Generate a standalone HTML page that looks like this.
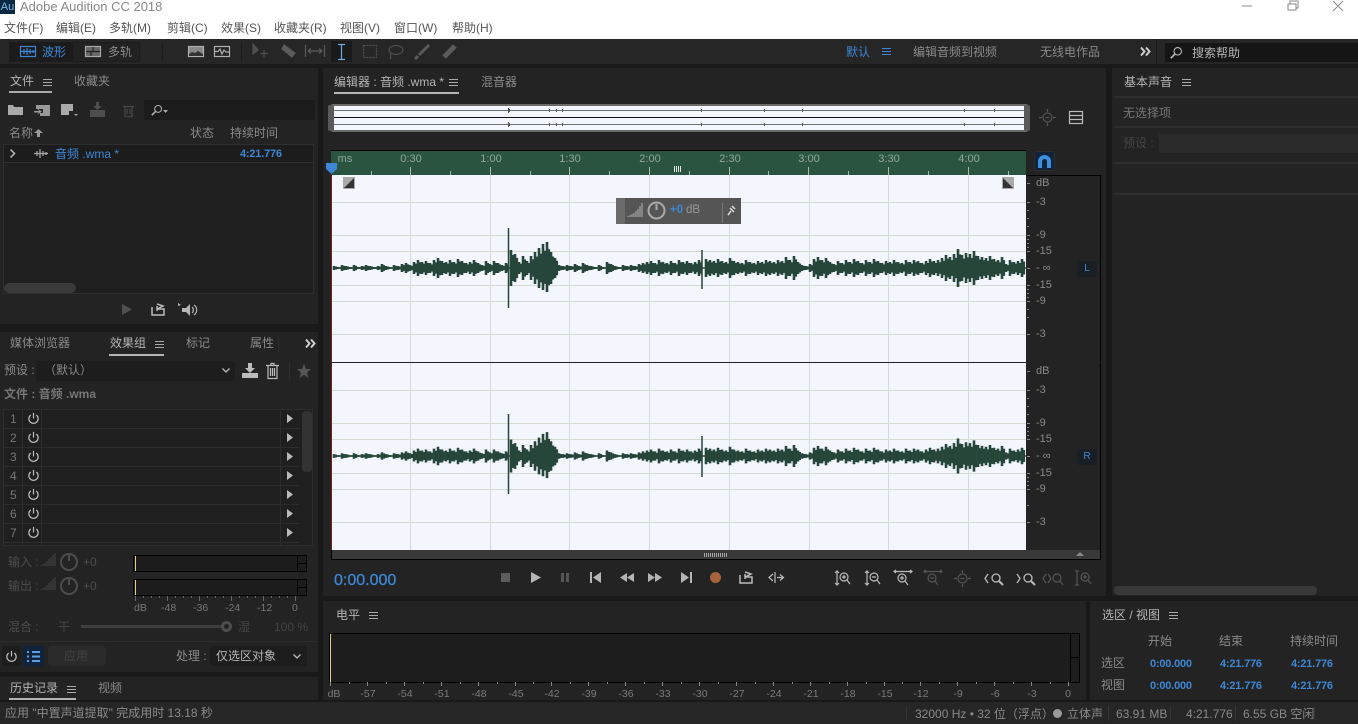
<!DOCTYPE html>
<html><head><meta charset="utf-8"><title>Adobe Audition CC 2018</title>
<style>
html,body{margin:0;padding:0;width:1358px;height:724px;overflow:hidden;background:#191919}
body{position:relative;font-family:"Liberation Sans","Noto Sans CJK SC",sans-serif;font-size:12px;color:#999}
.t{position:absolute;white-space:nowrap;line-height:14px}
.b{position:absolute;box-sizing:border-box}
svg.i{position:absolute;overflow:visible;fill:none;stroke:#b0b0b0;stroke-width:1.2}
.blue{color:#3d87d6}.dim{color:#4d4d4d}.mid{color:#8a8a8a}.lt{color:#b5b5b5}
.menu{color:#555;top:21px}
.db{color:#8a8a8a;font-size:11px;left:1036px}
.tick{color:#7b7b7b;font-size:10.5px;top:687px;transform:translateX(-50%)}
.rt{color:#8fa79b;font-size:11px;top:152px;transform:translateX(-50%)}
.num{color:#777;font-size:12px;left:10px}
.val{font-size:11px;font-weight:bold;letter-spacing:-.2px}
</style></head><body>
<svg width="0" height="0" style="position:absolute"><defs>
<symbol id="pw" viewBox="0 0 14 14" overflow="visible"><path d="M4 3.2A5 5 0 1 0 10 3.2M7 1V7" fill="none" stroke="#bdbdbd" stroke-width="1.3"/></symbol>
<symbol id="ham" viewBox="0 0 9 9"><path d="M0 1.5H9M0 4.5H9M0 7.5H9" stroke="#aaa" stroke-width="1"/></symbol>
<symbol id="mag" viewBox="0 0 16 16" overflow="visible"><circle cx="6.5" cy="6.5" r="4.6" fill="none" stroke="currentColor" stroke-width="1.3"/><path d="M10 10L15 15" stroke="currentColor" stroke-width="2"/></symbol>
<path id="wave" fill="none" d="M334-2v4M338-1v2M342-3v6M346-2v4M350-1v2M354-3v6M358-1v2M362-2v4M366-3v6M370-2v4M374-1v2M378-2v4M382-4v8M386-2v4M390-1v2M394-3v6M398-2v4M402-4v8M406-5v10M410-3v6M414-6v12M418-8v16M422-6v12M426-7v14M430-5v10M434-8v16M438-10v20M442-7v14M446-6v12M450-8v16M454-6v12M458-9v18M462-7v14M466-5v10M470-6v12M474-8v16M478-5v10M482-3v6M486-7v14M490-4v8M494-7v14M498-5v10M502-3v6M506-5v10M511-18v36M515-14v28M519-6v12M523-12v24M527-7v14M531-12v24M535-16v32M539-20v40M543-24v46M547-26v50M551-16v32M555-10v20M559-3v6M563-2v4M567-3v6M571-2v4M575-4v8M579-2v4M583-5v10M587-3v6M591-2v4M595-1v2M599-3v6M603-1v2M607-6v12M611-4v8M615-2v4M619-1v2M623-3v6M627-2v4M631-3v6M635-2v4M639-4v8M643-5v10M647-6v12M651-7v14M655-5v10M659-8v16M663-6v12M667-5v10M671-7v14M675-5v10M679-8v16M683-6v12M687-7v14M691-5v10M695-6v12M699-8v16M706-9v18M710-8v16M714-7v14M718-9v18M722-7v14M726-6v12M730-10v20M734-7v14M738-6v12M742-5v10M746-8v16M750-6v12M754-5v10M758-7v14M762-6v12M766-8v16M770-7v14M774-6v12M778-8v16M782-7v14M786-11v22M790-8v16M794-12v24M798-6v12M802-3v6M806-2v4M810-4v8M814-9v18M818-11v22M822-8v16M826-10v20M830-6v12M834-4v8M838-7v14M842-5v10M846-8v16M850-6v12M854-9v18M858-7v14M862-5v10M866-8v16M870-6v12M874-9v18M878-7v14M882-5v10M886-7v14M890-6v12M894-8v16M898-6v12M902-5v10M906-8v16M910-6v12M914-8v16M918-7v14M922-5v10M926-7v14M930-9v18M934-7v14M938-8v16M942-10v20M946-13v26M950-11v22M954-14v28M958-19v38M962-13v26M966-15v30M970-14v28M974-17v34M978-12v24M982-11v22M986-10v20M990-12v24M994-9v18M998-8v16M1002-11v22M1006-4v8M1010-8v16M1014-6v12M1018-7v14M1022-9v18"/>
<symbol id="chev" viewBox="0 0 11 9" overflow="visible"><path d="M1 .5L4.500 4.500L1 8.500M6 .5L9.500 4.500L6 8.500" fill="none" stroke="#d0d0d0" stroke-width="2"/></symbol>
</defs></svg>

<!-- title + menu -->
<div class="b" style="left:0;top:0;width:1358px;height:39px;background:#fff"></div>
<div class="b" style="left:0;top:0;width:15px;height:14px;background:#0a2a44;color:#7fb4e6;font-size:11px;line-height:14px;text-align:center">Au</div>
<div class="t" style="left:20px;top:0;color:#888;font-size:13px">Adobe Audition CC 2018</div>
<div class="t menu" style="left:4px">文件(F)</div><div class="t menu" style="left:56px">编辑(E)</div><div class="t menu" style="left:109px">多轨(M)</div><div class="t menu" style="left:167px">剪辑(C)</div><div class="t menu" style="left:221px">效果(S)</div><div class="t menu" style="left:274px">收藏夹(R)</div><div class="t menu" style="left:340px">视图(V)</div><div class="t menu" style="left:394px">窗口(W)</div><div class="t menu" style="left:452px">帮助(H)</div>
<svg class="i" style="left:1242px;top:0;stroke:#888;stroke-width:1" width="110" height="14"><path d="M0 6H10M46 4H54V10H46ZM48 4V1H56V8H54M91 1L101 11M101 1L91 11"/></svg>

<!-- toolbar -->
<div class="b" style="left:0;top:39px;width:1358px;height:25px;background:#262626"></div>
<div class="b" style="left:9px;top:42px;width:131px;height:20px;background:#222;border:1px solid #1c1c1c"></div>
<div class="b" style="left:10px;top:43px;width:63px;height:18px;background:#1b1b1b"></div>
<svg class="i" style="left:20px;top:46px;stroke:#3d87d6" width="16" height="11"><rect x=".5" y=".5" width="15" height="10"/><path d="M1 5.5H15M4 3V8M7 2V9M10 3V8M13 4V7"/></svg>
<div class="t blue" style="left:42px;top:45px">波形</div>
<svg class="i" style="left:85px;top:46px;stroke:#aaa" width="16" height="11"><rect x=".5" y=".5" width="15" height="10" fill="#666"/><path d="M1 5.5H15M8 1V5M6 6V10" stroke="#222"/></svg>
<div class="t mid" style="left:108px;top:45px">多轨</div>
<div class="b" style="left:162px;top:42px;width:1px;height:20px;background:#1c1c1c"></div>
<svg class="i" style="left:188px;top:46px" width="16" height="11"><rect x=".5" y=".5" width="15" height="10" fill="#888"/><path d="M1 8L4 6L7 7L10 5L15 8V10H1Z" fill="#333" stroke="none"/></svg>
<svg class="i" style="left:214px;top:46px" width="16" height="11"><rect x=".5" y=".5" width="15" height="10"/><path d="M1 5.5H4L6 3L8 8L10 4L12 6H15"/></svg>
<div class="b" style="left:241px;top:42px;width:1px;height:20px;background:#1c1c1c"></div>
<svg class="i" style="left:252px;top:44px;stroke:#4f4f4f" width="18" height="14"><path d="M1 0V10L6 6Z" fill="#4f4f4f"/><path d="M12 6V13M8.500 9.500H16"/></svg>
<svg class="i" style="left:281px;top:44px;stroke:#5b5b5b" width="16" height="15"><path d="M3 1L14 9L11 13L1 5Z" fill="#5b5b5b"/></svg>
<svg class="i" style="left:305px;top:45px;stroke:#5b5b5b" width="20" height="13"><path d="M.5 0V12M19.500 0V12M3 6H17M3 6L6 3.500M3 6L6 8.500M17 6L14 3.500M17 6L14 8.500"/></svg>
<div class="b" style="left:331px;top:41px;width:21px;height:21px;background:#1a1a1a"></div>
<svg class="i" style="left:337px;top:44px;stroke:#6fa9e0" width="9" height="16"><path d="M1 .5H8M1 15.500H8M4.500 .5V15.500"/></svg>
<svg class="i" style="left:363px;top:45px;stroke:#4f4f4f;stroke-dasharray:2 1" width="14" height="13"><rect x=".5" y=".5" width="13" height="12"/></svg>
<svg class="i" style="left:388px;top:45px;stroke:#4f4f4f" width="16" height="14"><ellipse cx="8" cy="5" rx="7" ry="4.500"/><path d="M3 8C2 10 4 12 2 14"/></svg>
<svg class="i" style="left:414px;top:45px;stroke:#5b5b5b;stroke-width:3" width="16" height="14"><path d="M15 0L5 10M4 11L1 14"/></svg>
<svg class="i" style="left:441px;top:44px;stroke:#5b5b5b;stroke-width:5" width="16" height="15"><path d="M14 2L3 13"/></svg>

<div class="t blue" style="left:846px;top:45px">默认</div>
<svg style="position:absolute;left:882px;top:47px" width="9" height="9"><path d="M0 1.500H9M0 4.500H9M0 7.500H9" stroke="#3d87d6"/></svg>
<div class="t mid" style="left:913px;top:45px">编辑音频到视频</div>
<div class="t mid" style="left:1040px;top:45px">无线电作品</div>
<svg style="position:absolute;left:1140px;top:47px;overflow:visible" width="11" height="9"><use href="#chev" width="11" height="9"/></svg>
<div class="b" style="left:1156px;top:39px;width:1px;height:25px;background:#1c1c1c"></div>
<div class="b" style="left:1165px;top:43px;width:193px;height:19px;background:#151515"></div>
<svg class="i" style="left:1170px;top:46px;color:#bbb;transform:scaleX(-1)" width="13" height="13"><use href="#mag" width="13" height="13"/></svg>
<div class="t lt" style="left:1192px;top:46px">搜索帮助</div>

<!-- panels -->
<div class="b" style="left:0;top:68px;width:318px;height:256px;background:#232323"></div>
<div class="b" style="left:0;top:332px;width:318px;height:340px;background:#232323"></div>
<div class="b" style="left:0;top:677px;width:318px;height:23px;background:#232323"></div>
<div class="b" style="left:323px;top:68px;width:783px;height:528px;background:#232323"></div>
<div class="b" style="left:1112px;top:68px;width:246px;height:528px;background:#232323"></div>
<div class="b" style="left:323px;top:601px;width:763px;height:99px;background:#232323"></div>
<div class="b" style="left:1090px;top:601px;width:268px;height:99px;background:#232323"></div>
<div class="b" style="left:0;top:702px;width:1358px;height:22px;background:#262626"></div>

<!-- file panel -->
<div class="t lt" style="left:10px;top:74px">文件</div>
<svg style="position:absolute;left:43px;top:78px" width="9" height="9"><use href="#ham"/></svg>
<div class="b" style="left:9px;top:91px;width:43px;height:2px;background:#aaa"></div>
<div class="t mid" style="left:74px;top:74px">收藏夹</div>
<svg class="i" style="left:8px;top:104px;stroke:none;fill:#aaa" width="15" height="12"><path d="M0 1H5L6 3H15V11H0Z"/></svg>
<svg class="i" style="left:34px;top:104px;stroke:none;fill:#999" width="17" height="13"><path d="M2 1H16V12H6V9H9V5H2Z"/><path d="M0 7H5L3 4.500L8 7.500L3 11L5 8.500H0Z"/></svg>
<svg class="i" style="left:61px;top:104px;stroke:none;fill:#aaa" width="17" height="13"><path d="M0 0H12V7H8V11H0Z"/><path d="M13 10H17L15 12Z"/></svg>
<svg class="i" style="left:90px;top:102px;stroke:none;fill:#4d4d4d" width="20" height="15"><path d="M0 8H15V15H0ZM6 0H9V4H12L7.500 8L3 4H6Z"/></svg>
<svg class="i" style="left:123px;top:105px;stroke:#474747" width="11" height="12"><path d="M0 1.500H11M2 1.500V11.500H9V1.500M4 4V9M7 4V9"/></svg>
<div class="b" style="left:144px;top:100px;width:171px;height:20px;background:#1b1b1b;border-radius:2px"></div>
<svg class="i" style="left:151px;top:104px;color:#bbb;transform:scaleX(-1)" width="12" height="12"><use href="#mag" width="12" height="12"/></svg>
<svg class="i" style="left:163px;top:110px;stroke:none;fill:#aaa" width="5" height="3"><path d="M0 0H5L2.500 3Z"/></svg>
<div class="t mid" style="left:9px;top:126px">名称</div>
<svg class="i" style="left:34px;top:129px;stroke:none;fill:#999" width="9" height="8"><path d="M4.500 0L9 4H6V8H3V4H0Z"/></svg>
<div class="t mid" style="left:190px;top:126px">状态</div>
<div class="t mid" style="left:230px;top:126px">持续时间</div>
<div class="b" style="left:3px;top:144px;width:311px;height:150px;border:1px solid #2e2e2e;background:#1f1f1f"></div>
<div class="b" style="left:4px;top:145px;width:309px;height:18px;background:#1c1c1c;border-bottom:1px solid #2e2e2e"></div>
<svg class="i" style="left:10px;top:149px;stroke:#bbb;stroke-width:1.500" width="5" height="9"><path d="M.5 .5L4.500 4.500L.5 8.500"/></svg>
<svg class="i" style="left:34px;top:149px;stroke:#aaa" width="14" height="9"><path d="M0 4.500H14M3 2V7M6 0V9M9 2V7M12 3V6"/></svg>
<div class="t" style="left:55px;top:147px;color:#3d87d6">音频 .wma *</div>
<div class="t val" style="left:240px;top:147px;color:#3d87d6">4:21.776</div>
<div class="b" style="left:4px;top:283px;width:72px;height:10px;background:#3a3a3a;border-radius:5px"></div>
<svg class="i" style="left:122px;top:304px;stroke:none;fill:#4f4f4f" width="10" height="11"><path d="M0 0L10 5.500L0 11Z"/></svg>
<svg class="i" style="left:151px;top:303px;stroke:#bbb;stroke-width:1.500" width="14" height="13"><path d="M1 4V12H13V6H6M6 3V8M6 1L12 3L6 6" /></svg>
<svg class="i" style="left:178px;top:303px;stroke:none;fill:#b5b5b5" width="21" height="14"><path d="M0 0L3 2L0 3ZM4 5H8L12 1V13L8 9H4Z"/><path d="M14 4A4 4 0 0 1 14 10M16 2A6 6 0 0 1 16 12" fill="none" stroke="#b5b5b5"/></svg>

<!-- effects -->
<div class="t mid" style="left:10px;top:336px">媒体浏览器</div>
<div class="t lt" style="left:110px;top:336px">效果组</div>
<svg style="position:absolute;left:155px;top:340px" width="9" height="9"><use href="#ham"/></svg>
<div class="b" style="left:109px;top:354px;width:55px;height:2px;background:#b5b5b5"></div>
<div class="t mid" style="left:186px;top:336px">标记</div>
<div class="t mid" style="left:250px;top:336px">属性</div>
<div class="b" style="left:278px;top:336px;width:1px;height:16px;background:#2c2c2c"></div>
<svg style="position:absolute;left:305px;top:339px;overflow:visible" width="11" height="9"><use href="#chev" width="11" height="9"/></svg>
<div class="t mid" style="left:4px;top:363px">预设 :</div>
<div class="b" style="left:36px;top:361px;width:199px;height:20px;background:#1d1d1d;border-radius:3px"></div>
<div class="t mid" style="left:44px;top:363px">（默认）</div>
<svg class="i" style="left:222px;top:368px;stroke:#bbb;stroke-width:1.300" width="8" height="5"><path d="M.5 .5L4 4L7.500 .5"/></svg>
<svg class="i" style="left:242px;top:363px;stroke:none;fill:#bbb" width="16" height="15"><path d="M0 10H16V15H0ZM6 0H10V5H13L8 10L3 5H6Z"/></svg>
<svg class="i" style="left:266px;top:363px;stroke:#bbb" width="13" height="16"><path d="M0 2.500H13M5 2V.5H8V2M2 3V15.500H11V3M4.500 5V13M6.500 5V13M8.500 5V13"/></svg>
<div class="b" style="left:289px;top:362px;width:1px;height:18px;background:#2e2e2e"></div>
<svg class="i" style="left:297px;top:364px;stroke:none;fill:#555" width="14" height="14"><path d="M7 0L9 5H14L10 8.500L11.500 14L7 10.800L2.500 14L4 8.500L0 5H5Z"/></svg>
<div class="t" style="left:4px;top:387px;color:#777;font-weight:bold">文件 : 音频 .wma</div>
<div class="b" style="left:3px;top:409px;width:310px;height:137px;background:#1f1f1f;border:1px solid #2c2c2c"></div>
<div class="b" style="left:22px;top:410px;width:1px;height:135px;background:#2c2c2c"></div>
<div class="b" style="left:41px;top:410px;width:1px;height:135px;background:#2c2c2c"></div>
<div class="b" style="left:280px;top:410px;width:1px;height:135px;background:#2c2c2c"></div>
<div class="b" style="left:4px;top:428px;width:295px;height:1px;background:#2c2c2c"></div>
<div class="b" style="left:4px;top:447px;width:295px;height:1px;background:#2c2c2c"></div>
<div class="b" style="left:4px;top:466px;width:295px;height:1px;background:#2c2c2c"></div>
<div class="b" style="left:4px;top:485px;width:295px;height:1px;background:#2c2c2c"></div>
<div class="b" style="left:4px;top:504px;width:295px;height:1px;background:#2c2c2c"></div>
<div class="b" style="left:4px;top:523px;width:295px;height:1px;background:#2c2c2c"></div>
<div class="b" style="left:4px;top:542px;width:295px;height:1px;background:#2c2c2c"></div>
<div class="t num" style="top:412px">1</div><div class="t num" style="top:431px">2</div><div class="t num" style="top:450px">3</div><div class="t num" style="top:469px">4</div><div class="t num" style="top:488px">5</div><div class="t num" style="top:507px">6</div><div class="t num" style="top:526px">7</div>
<svg style="position:absolute;left:27px;top:412px" width="13" height="13"><use href="#pw" width="13" height="13"/></svg>
<svg style="position:absolute;left:27px;top:431px" width="13" height="13"><use href="#pw" width="13" height="13"/></svg>
<svg style="position:absolute;left:27px;top:450px" width="13" height="13"><use href="#pw" width="13" height="13"/></svg>
<svg style="position:absolute;left:27px;top:469px" width="13" height="13"><use href="#pw" width="13" height="13"/></svg>
<svg style="position:absolute;left:27px;top:488px" width="13" height="13"><use href="#pw" width="13" height="13"/></svg>
<svg style="position:absolute;left:27px;top:507px" width="13" height="13"><use href="#pw" width="13" height="13"/></svg>
<svg style="position:absolute;left:27px;top:526px" width="13" height="13"><use href="#pw" width="13" height="13"/></svg>
<svg class="i" style="left:287px;top:414px;stroke:none;fill:#bbb" width="6" height="124"><path d="M0 0L6 4.500L0 9ZM0 19L6 23.500L0 28ZM0 38L6 42.500L0 47ZM0 57L6 61.500L0 66ZM0 76L6 80.500L0 85ZM0 95L6 99.500L0 104ZM0 114L6 118.500L0 123Z"/></svg>
<div class="b" style="left:302px;top:411px;width:10px;height:61px;background:#333;border-radius:4px"></div>

<div class="t dim" style="left:8px;top:555px">输入 :</div>
<div class="t dim" style="left:8px;top:579px">输出 :</div>
<svg class="i" style="left:40px;top:553px;stroke:#4d4d4d;stroke-width:.8" width="16" height="14"><path d="M1 13V12M3 13V11M5 13V10M7 13V8M9 13V6M11 13V4M13 13V2M15 13V0"/></svg>
<svg class="i" style="left:40px;top:577px;stroke:#4d4d4d;stroke-width:.8" width="16" height="14"><path d="M1 13V12M3 13V11M5 13V10M7 13V8M9 13V6M11 13V4M13 13V2M15 13V0"/></svg>
<svg class="i" style="left:60px;top:553px;stroke:#4d4d4d;stroke-width:2" width="18" height="18"><circle cx="9" cy="9" r="8"/><path d="M9 2V8"/></svg>
<svg class="i" style="left:60px;top:577px;stroke:#4d4d4d;stroke-width:2" width="18" height="18"><circle cx="9" cy="9" r="8"/><path d="M9 2V8"/></svg>
<div class="t dim" style="left:83px;top:555px">+0</div><div class="t dim" style="left:83px;top:579px">+0</div>
<div class="b" style="left:133px;top:555px;width:174px;height:17px;background:#1c1c1c;border:1px solid #000"></div>
<div class="b" style="left:133px;top:579px;width:174px;height:17px;background:#1c1c1c;border:1px solid #000"></div>
<div class="b" style="left:135px;top:556px;width:1px;height:15px;background:#e6cf7a"></div>
<div class="b" style="left:135px;top:580px;width:1px;height:15px;background:#e6cf7a"></div>
<div class="b" style="left:297px;top:556px;width:1px;height:15px;background:#000"></div>
<div class="b" style="left:297px;top:580px;width:1px;height:15px;background:#000"></div>
<div class="b" style="left:298px;top:563px;width:8px;height:1px;background:#000"></div>
<div class="b" style="left:298px;top:587px;width:8px;height:1px;background:#000"></div>
<svg class="i" style="left:135px;top:596px;stroke:#666;stroke-width:1" width="170" height="6"><path d="M.5 0V5M32.500 0V5M64.500 0V5M96.500 0V5M128.500 0V5M160.500 0V5" /><path d="M8.500 0V2M16.500 0V2M24.500 0V2M40.500 0V2M48.500 0V2M56.500 0V2M72.500 0V2M80.500 0V2M88.500 0V2M104.500 0V2M112.500 0V2M120.500 0V2M136.500 0V2M144.500 0V2M152.500 0V2"/></svg>
<div class="t" style="left:134px;top:601px;color:#777;font-size:10.500px">dB</div>
<div class="t" style="left:161px;top:601px;color:#777;font-size:10.500px">-48</div>
<div class="t" style="left:193px;top:601px;color:#777;font-size:10.500px">-36</div>
<div class="t" style="left:225px;top:601px;color:#777;font-size:10.500px">-24</div>
<div class="t" style="left:257px;top:601px;color:#777;font-size:10.500px">-12</div>
<div class="t" style="left:292px;top:601px;color:#777;font-size:10.500px">0</div>
<div class="t dim" style="left:8px;top:620px">混合 :</div>
<div class="t" style="left:58px;top:620px;color:#444">干</div>
<div class="b" style="left:81px;top:625px;width:140px;height:3px;background:#3e3e3e"></div>
<div class="b" style="left:221px;top:621px;width:11px;height:11px;border:3px solid #4d4d4d;border-radius:50%"></div>
<div class="t" style="left:238px;top:620px;color:#444">湿</div>
<div class="t" style="left:274px;top:620px;color:#444">100 %</div>
<div class="b" style="left:0;top:641px;width:316px;height:1px;background:#2c2c2c"></div>
<div class="b" style="left:2px;top:646px;width:19px;height:20px;background:#1d1d1d;border-radius:2px"></div>
<svg style="position:absolute;left:5px;top:650px" width="13" height="13"><use href="#pw" width="13" height="13"/></svg>
<div class="b" style="left:23px;top:646px;width:21px;height:20px;background:#10233a;border-radius:2px"></div>
<svg class="i" style="left:27px;top:651px;stroke:#5aa0e6;stroke-width:2" width="13" height="11"><path d="M0 1H2M5 1H13M0 5.500H2M5 5.500H13M0 10H2M5 10H13"/></svg>
<div class="b" style="left:48px;top:646px;width:58px;height:20px;background:#2a2a2a;border-radius:4px"></div>
<div class="t" style="left:64px;top:649px;color:#444">应用</div>
<div class="t mid" style="left:176px;top:649px">处理 :</div>
<div class="b" style="left:210px;top:646px;width:97px;height:20px;background:#1d1d1d;border-radius:3px"></div>
<div class="t lt" style="left:216px;top:649px">仅选区对象</div>
<svg class="i" style="left:293px;top:654px;stroke:#bbb;stroke-width:1.300" width="8" height="5"><path d="M.5 .5L4 4L7.500 .5"/></svg>

<div class="t lt" style="left:10px;top:681px">历史记录</div>
<svg style="position:absolute;left:67px;top:685px" width="9" height="9"><use href="#ham"/></svg>
<div class="b" style="left:9px;top:698px;width:67px;height:2px;background:#b5b5b5"></div>
<div class="t mid" style="left:98px;top:681px">视频</div>

<!-- editor -->
<div class="t lt" style="left:334px;top:75px">编辑器 : 音频 .wma *</div>
<svg style="position:absolute;left:449px;top:78px" width="9" height="9"><use href="#ham"/></svg>
<div class="b" style="left:334px;top:92px;width:125px;height:2px;background:#b5b5b5"></div>
<div class="t mid" style="left:481px;top:75px">混音器</div>

<div class="b" style="left:331px;top:104px;width:697px;height:28px;background:#f4f6fd;border:2px solid #6b6b6b;border-radius:2px"></div>
<div class="b" style="left:328px;top:105px;width:6px;height:26px;background:#5a5a5a;border-radius:2px"></div>
<div class="b" style="left:1024px;top:105px;width:6px;height:26px;background:#5a5a5a;border-radius:2px"></div>
<div class="b" style="left:334px;top:117px;width:690px;height:1px;background:#111"></div>
<div class="b" style="left:334px;top:110px;width:690px;height:1px;background:#6d7572"></div>
<div class="b" style="left:334px;top:124px;width:690px;height:1px;background:#6d7572"></div>
<svg class="i" style="left:334px;top:106px;stroke:#555;stroke-width:1" width="690" height="24"><path d="M174.500 2V7M175.500 3V6M215.500 3V6M222.500 3V6M228.500 3V6M367.500 3V6M430.500 3V6M468.500 3V6M174.500 16V21M175.500 17V20M215.500 17V20M222.500 17V20M228.500 17V20M367.500 17V20M430.500 17V20M468.500 17V20M630.500 3V6M660.500 3V6M630.500 17V20M660.500 17V20"/></svg>
<svg class="i" style="left:1039px;top:109px;stroke:#555;stroke-width:1.200" width="17" height="17"><circle cx="8.500" cy="8.500" r="4.500"/><path d="M8.500 0V3M8.500 14V17M0 8.500H3M14 8.500H17M6.500 8.500H10.500"/></svg>
<svg class="i" style="left:1069px;top:111px;stroke:#bbb" width="14" height="13"><rect x=".5" y=".5" width="13" height="12"/><path d="M1 4.500H13M1 8.500H13"/></svg>

<!-- ruler -->
<div class="b" style="left:331px;top:150px;width:695px;height:25px;background:#2b5440;border-top:1px solid #000"></div>
<div class="t rt" style="left:345px">ms</div><div class="t rt" style="left:411px">0:30</div><div class="t rt" style="left:491px">1:00</div><div class="t rt" style="left:570px">1:30</div><div class="t rt" style="left:650px">2:00</div><div class="t rt" style="left:730px">2:30</div><div class="t rt" style="left:809px">3:00</div><div class="t rt" style="left:889px">3:30</div><div class="t rt" style="left:969px">4:00</div>
<svg class="i" style="left:331px;top:164px;stroke:#a9bbb1;stroke-width:1" width="695" height="11"><path d="M79.500 3V11M159.500 3V11M238.500 3V11M318.500 3V11M398.500 3V11M477.500 3V11M557.500 3V11M637.500 3V11M40.500 7V11M119.500 7V11M199.500 7V11M278.500 7V11M358.500 7V11M437.500 7V11M517.500 7V11M597.500 7V11M677.500 7V11"/><path d="M343.500 2V8M345.500 2V8M347.500 2V8M349.500 2V8" stroke="#dfe6e2"/></svg>

<!-- waveform -->
<div class="b" style="left:1026px;top:175px;width:75px;height:385px;border:1px solid #000;border-left:none"></div>
<div class="b" style="left:331px;top:550px;width:770px;height:10px;background:#383838;border:1px solid #000;border-top:none"></div>
<svg style="position:absolute;left:331px;top:175px;background:#f4f6fd" width="695" height="375" viewBox="331 175 695 375">
<path fill="none" stroke="#d3dbd3" stroke-width="1" d="M410.500 175V550M490.500 175V550M569.500 175V550M649.500 175V550M729.500 175V550M809.500 175V550M888.500 175V550M968.500 175V550M331 202.500H1026M331 235.500H1026M331 251.500H1026M331 285.500H1026M331 301.500H1026M331 334.500H1026M331 390.500H1026M331 423.500H1026M331 439.500H1026M331 473.500H1026M331 489.500H1026M331 522.500H1026"/>
<path d="M331.500 175V550" stroke="#7a1f1f" stroke-width="1"/>
<g stroke="#27463b">
<use href="#wave" stroke-width="2.600" transform="translate(0,268)"/>
<use href="#wave" stroke-width="2.200" transform="translate(2,268) scale(1,.72)"/>
<use href="#wave" stroke-width="2.600" transform="translate(0,456) scale(1,.92)"/>
<use href="#wave" stroke-width="2.200" transform="translate(2,456) scale(1,.66)"/>
</g>
<path d="M333 268H1026M333 456H1026" stroke="#27463b" stroke-width="1.500"/>
<path d="M508.500 228V308M508.500 414V494M702 250V289M702 436V477" stroke="#27463b" stroke-width="1.500"/>
</svg>
<div class="b" style="left:331px;top:362px;width:770px;height:1px;background:#222"></div>
<svg style="position:absolute;left:326px;top:163px" width="11" height="11"><path d="M0 0H11V6L5.500 11L0 6Z" fill="#3d87d6"/></svg>
<svg style="position:absolute;left:343px;top:177px" width="12" height="12"><rect width="12" height="12" fill="#aaa"/><path d="M11 1V11H1Z" fill="#333"/></svg>
<svg style="position:absolute;left:1002px;top:177px" width="12" height="12"><rect width="12" height="12" fill="#aaa"/><path d="M1 1V11H11Z" fill="#333"/></svg>

<!-- hud -->
<div class="b" style="left:616px;top:198px;width:125px;height:26px;background:#555"></div>
<div class="b" style="left:616px;top:198px;width:9px;height:26px;background:#6b6b6b"></div>
<svg class="i" style="left:627px;top:202px;stroke:#ccc;stroke-width:.8" width="17" height="16"><path d="M1 15V14M3 15V13M5 15V12M7 15V11M9 15V9M11 15V7M13 15V4M15 15V1"/></svg>
<svg class="i" style="left:647px;top:201px;stroke:#aaa;stroke-width:2" width="19" height="19"><circle cx="9.500" cy="9.500" r="8"/><path d="M9.500 3V9"/></svg>
<div class="t" style="left:670px;top:203px;color:#3d87d6;font-weight:bold;font-size:11.500px">+0</div>
<div class="t" style="left:686px;top:203px;color:#999;font-size:11.500px">dB</div>
<div class="b" style="left:722px;top:203px;width:1px;height:20px;background:#777"></div>
<svg class="i" style="left:727px;top:205px;stroke:#ddd;stroke-width:1.500" width="9" height="11"><path d="M1 10L4 6M3 3L7 7M5 1L8 4" /></svg>

<div class="b" style="left:1034px;top:151px;width:21px;height:20px;background:#10233a;border:1px solid #2c2c2c;border-radius:2px"></div>
<svg class="i" style="left:1038px;top:155px;stroke:none;fill:#3d8ee0" width="13" height="13"><path d="M0 6.500A6.500 6.500 0 0 1 13 6.500V13H9V6.500A2.500 2.500 0 0 0 4 6.500V13H0Z"/></svg>

<div class="t db" style="top:176px">dB</div><div class="t db" style="top:195px">-3</div><div class="t db" style="top:228px">-9</div><div class="t db" style="top:244px">-15</div><div class="t db" style="top:261px">- ∞</div><div class="t db" style="top:278px">-15</div><div class="t db" style="top:294px">-9</div><div class="t db" style="top:327px">-3</div>
<div class="t db" style="top:364px">dB</div><div class="t db" style="top:383px">-3</div><div class="t db" style="top:416px">-9</div><div class="t db" style="top:432px">-15</div><div class="t db" style="top:449px">- ∞</div><div class="t db" style="top:466px">-15</div><div class="t db" style="top:482px">-9</div><div class="t db" style="top:515px">-3</div>
<svg class="i" style="left:1027px;top:175px;stroke:#888;stroke-width:1" width="5" height="375"><path d="M0 8.500H3M0 27.500H3M0 35.500H2M0 43.500H2M0 51.500H2M0 60.500H3M0 64.500H2M0 68.500H2M0 72.500H2M0 76.500H3M0 93.500H3M0 110.500H3M0 114.500H2M0 118.500H2M0 122.500H2M0 126.500H3M0 134.500H2M0 142.500H2M0 159.500H3M0 196.500H3M0 215.500H3M0 223.500H2M0 231.500H2M0 239.500H2M0 248.500H3M0 252.500H2M0 256.500H2M0 260.500H2M0 264.500H3M0 281.500H3M0 298.500H3M0 302.500H2M0 306.500H2M0 310.500H2M0 314.500H3M0 330.500H2M0 347.500H3"/></svg>
<div class="b" style="left:1077px;top:261px;width:20px;height:16px;background:#1a1f26;border-radius:2px;color:#3d87d6;font-size:10px;line-height:16px;text-align:center">L</div>
<div class="b" style="left:1077px;top:449px;width:20px;height:16px;background:#1a1f26;border-radius:2px;color:#3d87d6;font-size:10px;line-height:16px;text-align:center">R</div>
<div class="b" style="left:704px;top:553px;width:23px;height:4px;background:repeating-linear-gradient(90deg,#aaa 0 1px,transparent 1px 2px)"></div>
<svg style="position:absolute;left:1076px;top:552px" width="8" height="5"><path d="M0 4L4 0L8 4Z" fill="#888"/></svg>

<!-- transport -->
<div class="t blue" style="left:334px;top:572px;font-size:16px;line-height:18px;-webkit-text-stroke:.3px #3d87d6">0:00.000</div>
<svg class="i" style="left:495px;top:570px;stroke:none;fill:#b5b5b5" width="200" height="15">
<rect x="6" y="3" width="9" height="9" fill="#5c5c5c"/>
<path d="M36 2L46 7.500L36 13Z"/>
<path d="M66 3H69V12H66ZM71 3H74V12H71Z" fill="#555"/>
<path d="M95 2H97V13H95ZM106 2V13L98 7.500Z"/>
<path d="M125 7.500L132 3V12ZM132 7.500L139 3V12Z"/>
<path d="M153 3L160 7.500L153 12ZM160 3L167 7.500L160 12Z"/>
<path d="M186 2L194 7.500L186 13ZM195 2H197V13H195Z"/>
</svg>
<div class="b" style="left:710px;top:572px;width:11px;height:11px;background:#a8623c;border-radius:50%"></div>
<svg class="i" style="left:739px;top:571px;stroke:#bbb;stroke-width:1.500" width="14" height="13"><path d="M1 4V12H13V6H6M6 3V8M6 1L12 3L6 6"/></svg>
<svg class="i" style="left:768px;top:571px;stroke:#bbb;stroke-width:1.200" width="16" height="13"><path d="M5 3L1 6.500L5 10M7 1V12M9 6.500H15M12 3.500L15.500 6.500L12 9.500" /></svg>
<!-- zoom tools -->
<svg class="i" style="left:835px;top:571px;stroke:#bbb" width="15" height="15"><path d="M2 0V14M0 2L2 0L4 2M0 12L2 14L4 12"/><circle cx="9" cy="6" r="4"/><path d="M12 9L15 13M7 6H11M9 4V8"/></svg>
<svg class="i" style="left:865px;top:571px;stroke:#bbb" width="15" height="15"><path d="M2 0V14M0 2L2 0L4 2M0 12L2 14L4 12"/><circle cx="9" cy="6" r="4"/><path d="M12 9L15 13M7 6H11"/></svg>
<svg class="i" style="left:894px;top:570px;stroke:#bbb" width="18" height="16"><path d="M0 1.500H18M2 0L0 1.500L2 3M16 0L18 1.500L16 3"/><circle cx="8" cy="8" r="4"/><path d="M11 11L14 15M6 8H10M8 6V10"/></svg>
<svg class="i" style="left:924px;top:570px;stroke:#555" width="18" height="16"><path d="M0 1.500H18M2 0L0 1.500L2 3M16 0L18 1.500L16 3"/><circle cx="8" cy="8" r="4"/><path d="M11 11L14 15M6 8H10"/></svg>
<svg class="i" style="left:954px;top:570px;stroke:#555" width="17" height="17"><circle cx="8.500" cy="8.500" r="4.500"/><path d="M8.500 0V3M8.500 14V17M0 8.500H3M14 8.500H17M6.500 8.500H10.500"/></svg>
<svg class="i" style="left:984px;top:572px;stroke:#bbb;stroke-width:1.300" width="20" height="14"><path d="M4 2L1 6.500L4 11"/><circle cx="12" cy="6" r="4"/><path d="M15 9L19 13" stroke-width="2"/></svg>
<svg class="i" style="left:1016px;top:572px;stroke:#bbb;stroke-width:1.300" width="20" height="14"><path d="M1 2L4 6.500L1 11"/><circle cx="12" cy="6" r="4"/><path d="M15 9L19 13" stroke-width="2"/></svg>
<svg class="i" style="left:1043px;top:572px;stroke:#555;stroke-width:1.200" width="20" height="14"><path d="M3 2L0 6.500L3 11M5 2L8 6.500L5 11"/><circle cx="14" cy="6" r="4"/><path d="M17 9L20 13"/></svg>
<svg class="i" style="left:1075px;top:571px;stroke:#555" width="16" height="15"><path d="M2 0V14M0 0H4M0 14H4"/><circle cx="10" cy="6" r="4"/><path d="M13 9L16 13M8 6H12M10 4V8"/></svg>
<div class="b" style="left:1114px;top:586px;width:203px;height:9px;background:#383838;border-radius:4px"></div>

<!-- right panel -->
<div class="t lt" style="left:1124px;top:75px">基本声音</div>
<svg style="position:absolute;left:1182px;top:78px" width="9" height="9"><use href="#ham"/></svg>
<div class="b" style="left:1113px;top:96px;width:245px;height:2px;background:#2d2d2d"></div>
<div class="t" style="left:1123px;top:106px;color:#777">无选择项</div>
<div class="b" style="left:1113px;top:126px;width:245px;height:2px;background:#2d2d2d"></div>
<div class="t" style="left:1123px;top:136px;color:#444">预设 :</div>
<div class="b" style="left:1159px;top:134px;width:199px;height:19px;background:#2b2b2b"></div>
<div class="b" style="left:1113px;top:162px;width:245px;height:2px;background:#2d2d2d"></div>
<div class="b" style="left:1113px;top:193px;width:245px;height:2px;background:#2d2d2d"></div>

<!-- levels -->
<div class="t lt" style="left:336px;top:608px">电平</div>
<svg style="position:absolute;left:369px;top:611px" width="9" height="9"><use href="#ham"/></svg>
<div class="b" style="left:329px;top:633px;width:751px;height:50px;background:#1d1d1d;border:1px solid #000"></div>
<div class="b" style="left:330px;top:634px;width:1px;height:48px;background:#e6cf7a"></div>
<div class="b" style="left:1070px;top:634px;width:1px;height:48px;background:#000"></div>
<div class="b" style="left:1071px;top:657px;width:8px;height:1px;background:#000"></div>
<svg class="i" style="left:330px;top:682px;stroke:#888;stroke-width:1" width="750" height="6"><path d="M.5 0V4M37.500 0V4M74.500 0V4M111.500 0V4M148.500 0V4M185.500 0V4M221.500 0V4M258.500 0V4M295.500 0V4M332.500 0V4M369.500 0V4M406.500 0V4M443.500 0V4M480.500 0V4M517.500 0V4M554.500 0V4M590.500 0V4M627.500 0V4M664.500 0V4M701.500 0V4M738.500 0V4M19.500 0V2M56.500 0V2M93.500 0V2M130.500 0V2M167.500 0V2M203.500 0V2M240.500 0V2M277.500 0V2M314.500 0V2M351.500 0V2M388.500 0V2M425.500 0V2M462.500 0V2M499.500 0V2M536.500 0V2M572.500 0V2M609.500 0V2M646.500 0V2M683.500 0V2M720.500 0V2"/></svg>
<div class="t tick" style="left:334px">dB</div><div class="t tick" style="left:368px">-57</div><div class="t tick" style="left:405px">-54</div><div class="t tick" style="left:442px">-51</div><div class="t tick" style="left:479px">-48</div><div class="t tick" style="left:516px">-45</div><div class="t tick" style="left:552px">-42</div><div class="t tick" style="left:589px">-39</div><div class="t tick" style="left:626px">-36</div><div class="t tick" style="left:663px">-33</div><div class="t tick" style="left:700px">-30</div><div class="t tick" style="left:737px">-27</div><div class="t tick" style="left:774px">-24</div><div class="t tick" style="left:811px">-21</div><div class="t tick" style="left:848px">-18</div><div class="t tick" style="left:885px">-15</div><div class="t tick" style="left:921px">-12</div><div class="t tick" style="left:958px">-9</div><div class="t tick" style="left:995px">-6</div><div class="t tick" style="left:1032px">-3</div><div class="t tick" style="left:1068px">0</div>

<!-- selection -->
<div class="t lt" style="left:1102px;top:608px">选区 / 视图</div>
<svg style="position:absolute;left:1169px;top:611px" width="9" height="9"><use href="#ham"/></svg>
<div class="t mid" style="left:1148px;top:634px">开始</div><div class="t mid" style="left:1219px;top:634px">结束</div><div class="t mid" style="left:1290px;top:634px">持续时间</div>
<div class="t mid" style="left:1101px;top:656px">选区</div><div class="t mid" style="left:1101px;top:678px">视图</div>
<div class="t blue val" style="left:1150px;top:657px">0:00.000</div><div class="t blue val" style="left:1220px;top:657px">4:21.776</div><div class="t blue val" style="left:1291px;top:657px">4:21.776</div>
<div class="t blue val" style="left:1150px;top:679px">0:00.000</div><div class="t blue val" style="left:1220px;top:679px">4:21.776</div><div class="t blue val" style="left:1291px;top:679px">4:21.776</div>

<!-- status -->
<div class="t mid" style="left:5px;top:706px">应用 "中置声道提取" 完成用时 13.18 秒</div>
<div class="t mid" style="left:915px;top:707px">32000 Hz • 32 位（浮点）</div>
<div class="b" style="left:1053px;top:709px;width:9px;height:9px;background:#999;border-radius:50%"></div>
<div class="t mid" style="left:1067px;top:707px">立体声</div>
<div class="t mid" style="left:1116px;top:707px">63.91 MB</div>
<div class="t mid" style="left:1186px;top:707px">4:21.776</div>
<div class="t mid" style="left:1243px;top:707px">6.55 GB 空闲</div>
<div class="b" style="left:906px;top:706px;width:1px;height:15px;background:#333"></div>
<div class="b" style="left:1108px;top:706px;width:1px;height:15px;background:#333"></div>
<div class="b" style="left:1170px;top:706px;width:1px;height:15px;background:#333"></div>
<div class="b" style="left:1235px;top:706px;width:1px;height:15px;background:#333"></div>
<div class="b" style="left:1314px;top:706px;width:1px;height:15px;background:#333"></div>
</body></html>
